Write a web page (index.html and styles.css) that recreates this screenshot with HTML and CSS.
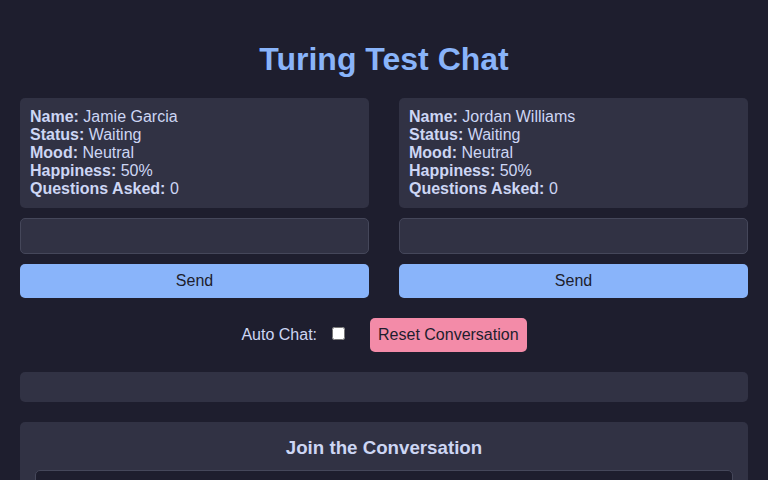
FILE: index.html
```html
<!DOCTYPE html>
<html>
<head>
<meta charset="utf-8">
<link rel="stylesheet" href="styles.css">
</head>
<body>
<h1 class="title">Turing Test Chat</h1>
<div class="players">
  <div class="player">
    <div class="card">
      <div><b>Name:</b> Jamie Garcia</div>
      <div><b>Status:</b> Waiting</div>
      <div><b>Mood:</b> Neutral</div>
      <div><b>Happiness:</b> 50%</div>
      <div><b>Questions Asked:</b> 0</div>
    </div>
    <input class="msg" type="text">
    <button class="send">Send</button>
  </div>
  <div class="player">
    <div class="card">
      <div><b>Name:</b> Jordan Williams</div>
      <div><b>Status:</b> Waiting</div>
      <div><b>Mood:</b> Neutral</div>
      <div><b>Happiness:</b> 50%</div>
      <div><b>Questions Asked:</b> 0</div>
    </div>
    <input class="msg" type="text">
    <button class="send">Send</button>
  </div>
</div>
<div class="controls">
  <label class="auto-label" for="auto">Auto Chat:</label>
  <input class="auto-check" id="auto" type="checkbox">
  <button class="reset">Reset Conversation</button>
</div>
<div class="log"></div>
<div class="join">
  <h3 class="join-title">Join the Conversation</h3>
  <input class="join-input" type="text">
</div>
</body>
</html>
```
FILE: styles.css
```css
html, body {
  margin: 0;
  background: #1e1e2e;
}
body {
  padding: 20px;
  font-family: "Liberation Sans", Arial, sans-serif;
  font-size: 16px;
  color: #cdd6f4;
}
.title {
  text-align: center;
  color: #89b4fa;
  font-size: 32px;
  margin: 21px 0 20px;
  line-height: 37px;
}
.players {
  display: grid;
  grid-template-columns: 1fr 1fr;
  gap: 30px;
}
.player {
  display: flex;
  flex-direction: column;
}
.card {
  background: #313244;
  border-radius: 5px;
  padding: 10px;
  line-height: 18px;
}
.msg {
  margin: 10px 0 0;
  height: 36px;
  box-sizing: border-box;
  background: #313244;
  border: 1px solid #45475a;
  border-radius: 5px;
  color: #cdd6f4;
  font: inherit;
  padding: 8px;
}
.send {
  margin-top: 10px;
  height: 34px;
  border: none;
  border-radius: 5px;
  background: #89b4fa;
  color: #1e1e2e;
  font: inherit;
  cursor: pointer;
}
.controls {
  display: flex;
  justify-content: center;
  align-items: center;
  margin-top: 20px;
}
.auto-check {
  margin: 0 25px 3px 15px;
  width: 13px;
  height: 13px;
}
.reset {
  height: 34px;
  border: none;
  border-radius: 5px;
  background: #f38ba8;
  color: #1e1e2e;
  font: inherit;
  padding: 0 8px;
}
.log {
  margin-top: 20px;
  height: 30px;
  background: #313244;
  border-radius: 5px;
}
.join {
  margin-top: 20px;
  background: #313244;
  border-radius: 5px;
  padding: 15px;
}
.join-title {
  text-align: center;
  font-size: 18.72px;
  margin: 0 0 12px;
  line-height: 21px;
}
.join-input {
  display: block;
  width: 100%;
  box-sizing: border-box;
  height: 40px;
  background: #1e1e2e;
  border: 1px solid #45475a;
  border-radius: 5px;
  color: #cdd6f4;
}
```
